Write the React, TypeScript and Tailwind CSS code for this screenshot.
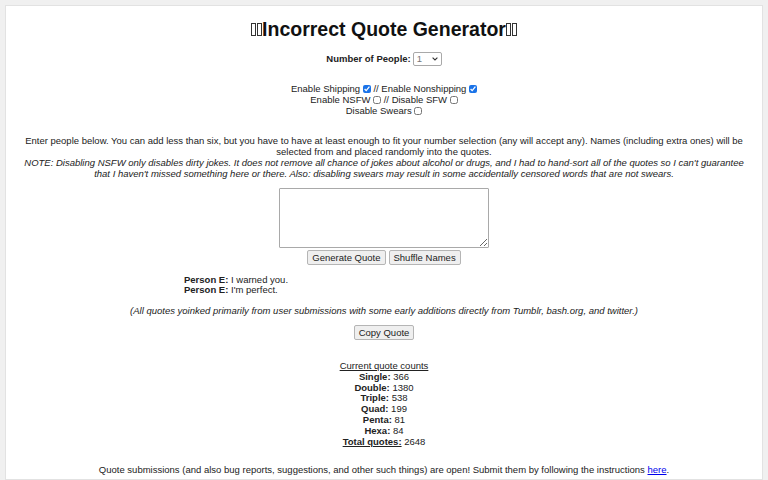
import { useState } from "react"

const quotes = [
  { who: "Person E", line: "I warned you." },
  { who: "Person E", line: "I'm perfect." },
]

const counts: [string, number][] = [
  ["Single", 366],
  ["Double", 1380],
  ["Triple", 538],
  ["Quad", 199],
  ["Penta", 81],
  ["Hexa", 84],
]

// missing-glyph boxes the heading shows around its title
const Tofu = () => (
  <span className="inline-flex gap-[1px] align-[-1px]">
    <span className="inline-block w-[5px] h-[13px] border border-[#333]" />
    <span className="inline-block w-[5px] h-[13px] border border-[#333]" />
  </span>
)

const Check = ({ checked }: { checked?: boolean }) => (
  <input type="checkbox" defaultChecked={checked} className="w-[8px] h-[8px] m-0 align-[-1px] accent-[#1a73e8]" />
)

const Btn = ({ children }: { children: React.ReactNode }) => (
  <button className="h-[15px] px-[4px] bg-[#efefef] border border-[#b5b5b5] rounded-[2px] text-[9.5px] leading-[13px] text-[#222]">
    {children}
  </button>
)

const App = () => {
  const [people, setPeople] = useState("1")

  return (
    <div className="w-full min-h-[480px] bg-[#f0f0f0] p-[5px] font-['Liberation_Sans',Arial,sans-serif] text-[#222]">
      <div className="bg-white border border-[#e2e2e2] flex flex-col items-center text-[9.5px] leading-[10.8px] pb-[3px]">
        <h1 className="mt-[12px] text-[19.5px] leading-[22px] font-bold text-[#111] flex items-center">
          <Tofu />Incorrect Quote Generator<Tofu />
        </h1>

        <div className="mt-[12px] flex items-center gap-[2px]">
          <b>Number of People:</b>
          <div className="relative">
            <select
              value={people}
              onChange={e => setPeople(e.target.value)}
              className="appearance-none w-[29px] h-[14px] border border-[#a9a9a9] rounded-[2px] bg-white pl-[3px] text-[9.5px] leading-[12px] text-[#777]"
            >
              {["1", "2", "3", "4", "5", "6"].map(n => <option key={n}>{n}</option>)}
            </select>
            <svg className="absolute right-[4px] top-[5px] pointer-events-none" width="6" height="4" viewBox="0 0 6 4">
              <path d="M0.6 0.6 L3 3 L5.4 0.6" fill="none" stroke="#333" strokeWidth="1.1" />
            </svg>
          </div>
        </div>

        <div className="mt-[18px] text-center">
          <div>Enable Shipping <Check checked /> // Enable Nonshipping <Check checked /></div>
          <div>Enable NSFW <Check /> // Disable SFW <Check /></div>
          <div>Disable Swears <Check /></div>
        </div>

        <div className="mt-[20px] px-[18px] text-center">
          <p>
            Enter people below. You can add less than six, but you have to have at least enough to fit your number selection (any will accept any). Names (including extra ones) will be selected from and placed randomly into the quotes.
          </p>
          <p className="italic">
            NOTE: Disabling NSFW only disables dirty jokes. It does not remove all chance of jokes about alcohol or drugs, and I had to hand-sort all of the quotes so I can't guarantee that I haven't missed something here or there. Also: disabling swears may result in some accidentally censored words that are not swears.
          </p>
        </div>

        <textarea className="mt-[8px] w-[210px] h-[60px] border border-[#a9a9a9] rounded-[1px] resize-y block" />

        <div className="mt-[2px] flex gap-[3px]">
          <Btn>Generate Quote</Btn>
          <Btn>Shuffle Names</Btn>
        </div>

        <div className="mt-[10px] w-[400px] text-left">
          {quotes.map((q, i) => (
            <div key={i}>
              <b>{q.who}:</b> {q.line}
            </div>
          ))}
        </div>

        <p className="mt-[10px] italic">
          (All quotes yoinked primarily from user submissions with some early additions directly from Tumblr, bash.org, and twitter.)
        </p>

        <div className="mt-[8px]">
          <Btn>Copy Quote</Btn>
        </div>

        <div className="mt-[21px] text-center">
          <div className="underline">Current quote counts</div>
          {counts.map(([label, n]) => (
            <div key={label}>
              <b>{label}:</b> {n}
            </div>
          ))}
          <div>
            <b className="underline">Total quotes:</b> 2648
          </div>
        </div>

        <p className="mt-[18px] text-center">
          Quote submissions (and also bug reports, suggestions, and other such things) are open! Submit them by following the instructions{" "}
          <a href="#" className="text-[#0000ee] underline">here</a>.
        </p>
      </div>
    </div>
  )
}

export default App
